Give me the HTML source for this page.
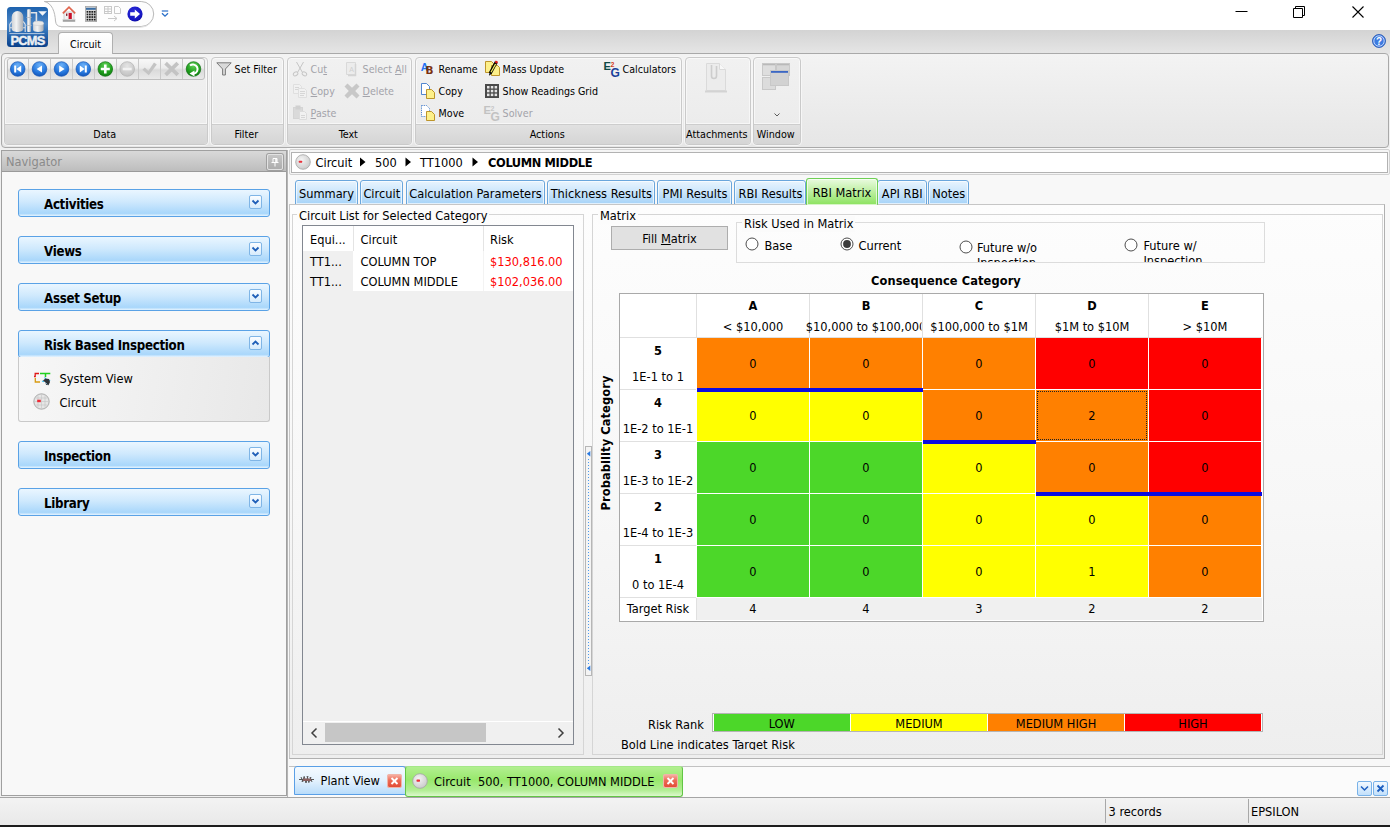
<!DOCTYPE html>
<html>
<head>
<meta charset="utf-8">
<title>PCMS - Circuit</title>
<style>
*{box-sizing:border-box;margin:0;padding:0}
html,body{width:1390px;height:827px;overflow:hidden;background:#f0f0f0}
body{position:relative;font-family:"DejaVu Sans Condensed","Liberation Sans",sans-serif;font-size:12.7px;color:#000;line-height:1}
.abs{position:absolute}
.t{position:absolute;white-space:pre;line-height:16px;height:16px}
.rb{font-size:10.6px;margin-top:.4px;margin-left:.6px}
.dis{color:#a3a3aa}
u{text-decoration:underline;text-underline-offset:1px}
/* title */
#title{left:0;top:0;width:1390px;height:30px;background:#fff}
#strip{left:0;top:30px;width:1390px;height:24px;background:linear-gradient(#d3d3d3,#e6e6e6)}
#ribbon{left:1px;top:53px;width:1388px;height:95px;border:1px solid #a9a9a9;border-radius:4px;background:linear-gradient(#f3f3f3,#e6e6e6)}
.grp{position:absolute;top:57px;height:88px;border:1px solid #cacaca;border-radius:4px;background:linear-gradient(#f1f1f1,#ececec 75%,#e9e9e9);box-shadow:0 0 0 1px #f6f6f6,inset 0 0 0 1px rgba(255,255,255,.55)}
.grp .lbl{position:absolute;left:0;right:0;bottom:0;height:20px;border-top:1px solid #cdcdcd;box-shadow:0 -1px 0 #f7f7f7;background:linear-gradient(#e1e1e1,#d5d5d5);text-align:center;padding-right:2.500px;font-size:10.7px;line-height:20px;border-radius:0 0 3px 3px}
#rtab{left:58px;top:32px;width:55px;height:22px;background:linear-gradient(#ffffff,#f6f6f6);border:1px solid #b0b0b0;border-bottom:none;border-radius:4px 4px 0 0;text-align:center;font-size:10.7px;line-height:23px}
/* navigator */
#nav{left:1px;top:150px;width:286px;height:646px;background:#f8f8f8;border:1px solid #a0a0a0}
#navh{left:0;top:0;width:284px;height:21px;background:linear-gradient(#d9d9d9,#bdbdbd);border-bottom:1px solid #9a9a9a;color:#8a8a8a;font-size:12.7px;line-height:21px;padding-left:4px}
.acc{position:absolute;left:18px;width:252px;height:28px;border:1px solid #5aa2e6;border-radius:3px;background:linear-gradient(#eaf6ff 0%,#cfe9fd 45%,#a9d7fb 90%,#e6f4ff 100%);font-weight:bold;font-size:13.2px;letter-spacing:-.3px;line-height:29px;padding-left:25px}
.acc i{position:absolute;right:7px;top:5px;width:13px;height:14px;border:1px solid #7fb5e6;border-radius:2px;background:linear-gradient(#fbfdff,#d6ebfc)}
/* main */
.tab{position:absolute;top:180px;height:25px;border:1px solid #6aa6dc;border-radius:3px 3px 1px 1px;background:linear-gradient(#e8f4fe 0%,#cde7fc 45%,#a6d3f8 100%);font-size:12.7px;line-height:25px;text-align:center;white-space:pre;padding-left:1px;box-shadow:inset 0 0 0 1px rgba(255,255,255,.65)}
.tab.on{top:178px;height:27px;border-color:#6fcf55;background:linear-gradient(#eafbe0 0%,#c0f0a6 45%,#8be25e 100%);line-height:28px;border-bottom:none}
.cell{position:absolute;text-align:center;font-size:12.7px}
</style>
</head>
<body>
<!-- ===== TITLE BAR ===== -->
<div class="abs" id="title"></div>
<div class="abs" id="strip"></div>
<div class="abs" id="ribbon"></div>
<div class="abs" id="rtab">Circuit</div>

<!--TOPICONS-START-->
<!-- quick access toolbar -->
<svg class="abs" style="left:40px;top:0px" width="116" height="29" viewBox="0 0 116 29">
  <path d="M4.300 1.500H101.200a12.500 12.500 0 0 1 0 25H21Q16 26.500 15.500 21C15 12 12 3 4.300 1.500z" fill="#fdfdfd" stroke="#b9b9b9" stroke-width="1"/>
  
  <path d="M21 27.300H101.200a13 13 0 0 0 9-4" fill="none" stroke="#e3e3e3" stroke-width="1"/>
</svg>
<!-- logo -->
<svg class="abs" style="left:7px;top:7px" width="41" height="40" viewBox="0 0 41 40">
  <defs><linearGradient id="lg" x1="0" y1="0" x2="0" y2="1"><stop offset="0" stop-color="#1d62ae"/><stop offset="0.42" stop-color="#4b86c6"/><stop offset="0.62" stop-color="#2f6fb6"/><stop offset="1" stop-color="#083f8a"/></linearGradient>
  <linearGradient id="tk" x1="0" y1="0" x2="1" y2="0"><stop offset="0" stop-color="#cfd2d6"/><stop offset="0.4" stop-color="#f3f3f3"/><stop offset="1" stop-color="#a9adb3"/></linearGradient></defs>
  <rect x="0" y="0" width="41" height="40" rx="3.500" fill="url(#lg)"/>
  <path d="M2.800 25V17.500a8 8 0 0 1 2.200-3M18.200 25V17.500a8 8 0 0 0-2.200-3M2.800 20.700h15.400" fill="none" stroke="#dfe4ea" stroke-width="1.100"/>
  <path d="M4.700 22V10a5.800 6 0 0 1 11.600 0v12c0 4-11.600 4-11.600 0z" fill="url(#tk)"/>
  <path d="M22 5.800h7.400v9" fill="none" stroke="#e1e4e8" stroke-width="1.600"/>
  <rect x="20.100" y="2.200" width="3.800" height="22.800" rx=".8" fill="url(#tk)"/>
  <path d="M19.500 10.500h5M19.500 18.500h5" stroke="#b9bdc3" stroke-width=".9"/>
  <path d="M26.100 16.300v6.500c0 3 10.500 3 10.500 0v-6.500z" fill="url(#tk)"/>
  <ellipse cx="31.350" cy="16.300" rx="5.250" ry="2.200" fill="#e9e9e9" stroke="#c4c7cb" stroke-width=".5"/>
  <path d="M31.200 4.300h8.700l-4.350 4.400z" fill="#f4f6f8"/>
  <rect x="2.500" y="26.200" width="35" height=".9" fill="#c9d6e6"/>
  <text x="20.500" y="37.700" text-anchor="middle" font-family="Liberation Sans, sans-serif" font-weight="bold" font-size="12.800" letter-spacing="-.75" fill="#eceff3" stroke="#eceff3" stroke-width=".45">PCMS</text>
</svg>
<!-- home -->
<svg class="abs" style="left:62px;top:6px" width="14" height="17" viewBox="0 0 14 17">
  <rect x="2" y="6" width="10" height="8" fill="#f1f1f1" stroke="#b5b5b5" stroke-width=".6"/>
  <path d="M.8 7.300L7 1.200l6.200 6.100" fill="none" stroke="#e0654e" stroke-width="1.700"/>
  <rect x="6.600" y="7" width="3.200" height="6.200" fill="#c8102a"/><rect x="4" y="7.500" width="1.400" height="2.400" fill="#8a2030"/>
  <rect x=".8" y="13.200" width="12.400" height="2.600" fill="#a2a2a2"/><rect x=".8" y="13.200" width="12.400" height=".8" fill="#d8d8d8"/>
</svg>
<!-- calc -->
<svg class="abs" style="left:85px;top:6px" width="12" height="16" viewBox="0 0 12 16">
  <rect x=".4" y=".4" width="11.200" height="15.200" fill="#d9d9d9" stroke="#a6a6a6" stroke-width=".8"/><rect x="1" y="1.800" width="10" height="2" fill="#3a6ea5"/><rect x="10.600" y=".8" width="1" height="14.800" fill="#8f8f8f"/>
  <g fill="#1e1e1e"><rect x="1.600" y="5" width="1.700" height="1.700"/><rect x="4" y="5" width="1.700" height="1.700"/><rect x="6.400" y="5" width="1.700" height="1.700"/><rect x="8.800" y="5" width="1.700" height="1.700"/><rect x="1.600" y="7.600" width="1.700" height="1.700"/><rect x="4" y="7.600" width="1.700" height="1.700"/><rect x="6.400" y="7.600" width="1.700" height="1.700"/><rect x="8.800" y="7.600" width="1.700" height="1.700"/><rect x="1.600" y="10.200" width="1.700" height="1.700"/><rect x="4" y="10.200" width="1.700" height="1.700"/><rect x="6.400" y="10.200" width="1.700" height="1.700"/><rect x="8.800" y="10.200" width="1.700" height="1.700"/><rect x="1.600" y="12.800" width="1.700" height="1.700"/><rect x="4" y="12.800" width="1.700" height="1.700"/><rect x="6.400" y="12.800" width="1.700" height="1.700"/><rect x="8.800" y="12.800" width="1.700" height="1.700"/></g>
</svg>
<!-- disabled grid/doc -->
<svg class="abs" style="left:104px;top:6px" width="18" height="16" viewBox="0 0 18 16">
  <g fill="none" stroke="#c9c9c9" stroke-width="1"><rect x=".5" y=".5" width="7" height="7"/><path d="M.5 3h7M.5 5.5h7M4 .5v7"/><path d="M10.5 .5h4l2 2v5h-6z"/><path d="M4 12.5h9m-3-2.5l3 2.5-3 2.5"/></g>
</svg>
<!-- blue arrow -->
<svg class="abs" style="left:127px;top:5.800px" width="16" height="16" viewBox="0 0 16 16">
  <defs><radialGradient id="ba" cx=".4" cy=".3" r=".8"><stop offset="0" stop-color="#2a2ad6"/><stop offset=".7" stop-color="#1616c4"/><stop offset="1" stop-color="#050590"/></radialGradient></defs>
  <circle cx="8" cy="8" r="7.6" fill="url(#ba)"/><path d="M3.2 6.2h4.6V3.4L13 8l-5.2 4.6V9.8H3.2z" fill="#fff"/>
</svg>
<!-- qat dropdown -->
<svg class="abs" style="left:161px;top:10px" width="8" height="8" viewBox="0 0 8 8"><path d="M.8 1h6.4" stroke="#2a6fc9" stroke-width="1.2"/><path d="M1 3.2l3 3 3-3" fill="none" stroke="#2a6fc9" stroke-width="1.3"/></svg>
<!-- window controls -->
<svg class="abs" style="left:1230px;top:0px" width="150" height="26" viewBox="0 0 150 26">
  <path d="M5.5 11.5h12" stroke="#000" stroke-width="1"/>
  <path d="M63.500 8.500h9v9h-9z M65.5 8.500v-2h9v9h-2" fill="none" stroke="#000" stroke-width="1"/>
  <path d="M122.500 6.500l11 11M133.500 6.500l-11 11" stroke="#000" stroke-width="1.1"/>
</svg>
<!-- help -->
<svg class="abs" style="left:1372px;top:34px" width="14" height="14" viewBox="0 0 14 14">
  <circle cx="7" cy="7" r="6.5" fill="#3d7be0" stroke="#1d4fae" stroke-width=".8"/><circle cx="7" cy="7" r="5.2" fill="none" stroke="#dfeaff" stroke-width=".8"/>
  <text x="7" y="10.6" text-anchor="middle" font-family="Liberation Sans, sans-serif" font-weight="bold" font-size="10" fill="#fff">?</text>
</svg>
<!--TOPICONS-END-->

<!--RIBBON-START-->
<div class="grp" style="left:4px;width:204px"><div class="lbl">Data</div></div>
<div class="grp" style="left:211px;width:73px"><div class="lbl">Filter</div></div>
<div class="grp" style="left:287px;width:125px"><div class="lbl">Text</div></div>
<div class="grp" style="left:415px;width:267px"><div class="lbl">Actions</div></div>
<div class="grp" style="left:685px;width:66px"><div class="lbl">Attachments</div></div>
<div class="grp" style="left:753px;width:48px"><div class="lbl">Window</div></div>
<!-- data nav toolbar -->
<div class="abs" style="left:7px;top:58px;width:198px;height:22px;border:1px solid #bebebe;border-radius:3px;background:linear-gradient(#f8f8f8 0%,#ececec 45%,#dadada 55%,#e9e9e9 100%)"></div>
<svg class="abs" style="left:7px;top:57.500px" width="198" height="22" viewBox="0 0 198 22">
  <defs>
    <radialGradient id="bl" cx=".5" cy=".25" r=".8"><stop offset="0" stop-color="#6db1f7"/><stop offset=".6" stop-color="#2678de"/><stop offset="1" stop-color="#0f4fb3"/></radialGradient>
    <radialGradient id="gr" cx=".5" cy=".25" r=".8"><stop offset="0" stop-color="#63d25a"/><stop offset=".6" stop-color="#1f9f1c"/><stop offset="1" stop-color="#0f7a10"/></radialGradient>
    <radialGradient id="gy" cx=".5" cy=".3" r=".8"><stop offset="0" stop-color="#e4e4e4"/><stop offset="1" stop-color="#bcbcbc"/></radialGradient>
  </defs>
  <g stroke="#c9c9c9" stroke-width="1"><path d="M21.500 1v20M43.500 1v20M65.500 1v20M87.500 1v20M109.500 1v20M131.500 1v20M153.500 1v20M175.500 1v20"/></g>
  <g stroke="#1a57b5" stroke-width=".7">
    <circle cx="10.700" cy="11" r="7.300" fill="url(#bl)"/><circle cx="32.500" cy="11" r="7.300" fill="url(#bl)"/><circle cx="54.500" cy="11" r="7.300" fill="url(#bl)"/><circle cx="76.300" cy="11" r="7.300" fill="url(#bl)"/>
  </g>
  <g fill="#fff">
    <path d="M7.200 7.500h2v7h-2zM14.200 7.500v7L9.400 11z"/>
    <path d="M35 7.500v7L29.600 11z"/>
    <path d="M52.200 7.500v7l5.400-3.500z"/>
    <path d="M72.800 7.500v7l4.800-3.500zM77.800 7.500h2v7h-2z"/>
  </g>
  <circle cx="98.300" cy="11" r="7.300" fill="url(#gr)" stroke="#117014" stroke-width=".7"/>
  <path d="M98.300 6.500v9M93.800 11h9" stroke="#fff" stroke-width="2.600"/>
  <circle cx="120.200" cy="11" r="7.300" fill="url(#gy)" stroke="#b3b3b3" stroke-width=".7"/>
  <path d="M115.700 11h9" stroke="#f2f2f2" stroke-width="2.600"/>
  <path d="M135.400 11.800l2.400-2.400 3.500 3.500 5.700-8.300 2.800 1.900-8 10.800z" fill="#c4c4c4"/>
  <path d="M160 6.500l9.400 9M169.400 6.500l-9.400 9" stroke="#c3c3c3" stroke-width="3.800" stroke-linecap="square"/>
  <circle cx="186.500" cy="11" r="7.300" fill="url(#gr)" stroke="#117014" stroke-width=".7"/>
  <path d="M183 7.600a4.600 4.600 0 1 1 4 8" fill="none" stroke="#fff" stroke-width="2"/><path d="M187.500 12.400v6.200l-5-3.100z" fill="#fff"/>
</svg>
<!-- filter -->
<svg class="abs" style="left:216px;top:62px" width="16" height="14" viewBox="0 0 16 14"><path d="M.8 .8h14.400L9.400 7v6H6.600V7z" fill="#d9d9d9" stroke="#7b7b7b" stroke-width="1"/></svg>
<div class="t rb" style="left:234px;top:61px">Set Filter</div>
<!-- text group -->
<svg class="abs" style="left:292px;top:61px" width="16" height="16" viewBox="0 0 16 16"><g fill="none" stroke="#c6c6c6" stroke-width="1"><path d="M4.500 1l6 10.500M11.500 1L5.500 11.500"/><ellipse cx="3.600" cy="12.800" rx="2.400" ry="1.800" transform="rotate(-35 3.600 12.800)"/><ellipse cx="12.400" cy="12.800" rx="2.400" ry="1.800" transform="rotate(35 12.400 12.800)"/></g></svg>
<div class="t rb dis" style="left:310px;top:61px">Cu<u>t</u></div>
<svg class="abs" style="left:292px;top:83px" width="16" height="16" viewBox="0 0 16 16"><g fill="#f1f1f1" stroke="#dfdfdf" stroke-width="1"><path d="M1.500 1.500h6l2 2v7h-8z"/><path d="M6.500 5.500h6l2 2v7h-8z"/></g><path d="M3 4.500h4M3 6.500h3M8 8.500h5M8 10.500h5M8 12.500h4" stroke="#d6d6d6"/></svg>
<div class="t rb dis" style="left:310px;top:83px"><u>C</u>opy</div>
<svg class="abs" style="left:292px;top:105px" width="16" height="16" viewBox="0 0 16 16"><g stroke-width="1"><rect x="1.500" y="2.500" width="9" height="11" fill="#dadada" stroke="#d4d4d4"/><rect x="4" y="1" width="4" height="3" fill="#d0d0d0" stroke="#d0d0d0"/><path d="M7.500 6.500h5l2 2v6h-7z" fill="#f1f1f1" stroke="#dcdcdc"/></g><path d="M9 10.500h4M9 12.500h4" stroke="#d6d6d6"/></svg>
<div class="t rb dis" style="left:310px;top:105px"><u>P</u>aste</div>
<svg class="abs" style="left:344px;top:61px" width="16" height="16" viewBox="0 0 16 16"><path d="M2.500 1.500h9v12h-9z" fill="#ececec" stroke="#d9d9d9"/><path d="M11.500 3v11.500H4" fill="none" stroke="#d4d4d4" stroke-width="1.500"/><text x="7.500" y="11" font-size="7" text-anchor="middle" fill="#d0d0d0" font-family="Liberation Sans, sans-serif">A</text></svg>
<div class="t rb dis" style="left:362px;top:61px">Select <u>A</u>ll</div>
<svg class="abs" style="left:344px;top:83px" width="16" height="16" viewBox="0 0 16 16"><path d="M.5 3.500l3-3 4.500 4.200 4.500-4.200 3 3-4.300 4.500 4.300 4.500-3 3-4.500-4.200-4.500 4.200-3-3 4.300-4.500z" fill="#c8c8c8"/></svg>
<div class="t rb dis" style="left:362px;top:83px"><u>D</u>elete</div>
<!-- actions -->
<svg class="abs" style="left:420px;top:61px" width="16" height="16" viewBox="0 0 16 16"><text x=".8" y="10" font-size="10.500" font-weight="bold" font-family="Liberation Sans, sans-serif" fill="#2470f4">A</text><text x="5.600" y="13" font-size="10.500" font-weight="bold" font-family="DejaVu Sans, sans-serif" fill="#7a3010">B</text></svg>
<div class="t rb" style="left:438px;top:61px">Rename</div>
<svg class="abs" style="left:420px;top:83px" width="16" height="16" viewBox="0 0 16 16"><path d="M1.500 .5h5l3 3v8h-8z" fill="#fff" stroke="#3d78c9" stroke-width=".9"/><path d="M6.500 6.500h5l3 3v6h-8z" fill="#fdf08a" stroke="#b78a1b" stroke-width=".9"/></svg>
<div class="t rb" style="left:438px;top:83px">Copy</div>
<svg class="abs" style="left:420px;top:105px" width="16" height="16" viewBox="0 0 16 16"><path d="M1.500 .5h5l3 3v8h-8z" fill="#fff" stroke="#3d78c9" stroke-width=".9" stroke-dasharray="1.200 1"/><path d="M6.500 6.500h5l3 3v6h-8z" fill="#fdf08a" stroke="#b78a1b" stroke-width=".9"/></svg>
<div class="t rb" style="left:438px;top:105px">Move</div>
<svg class="abs" style="left:484px;top:60px" width="17" height="17" viewBox="0 0 17 17"><path d="M1.500 1.500h6l2 2v9h-8z" fill="#fdf08a" stroke="#b78a1b" stroke-width=".9"/><path d="M7.500 5.500h6l2 2v8h-8z" fill="#fdf08a" stroke="#b78a1b" stroke-width=".9"/><path d="M12.300 2L6.200 13.200" stroke="#000" stroke-width="3.200"/><path d="M5 15.800l.6-3.200 2 1.100z" fill="#000"/><path d="M11.600 4l-4.600 8.300" stroke="#f8f060" stroke-width="1.300"/><path d="M12.900 1.200l-1 1.800" stroke="#e01818" stroke-width="2.600"/></svg>
<div class="t rb" style="left:502px;top:61px">Mass Update</div>
<svg class="abs" style="left:485px;top:84px" width="14" height="14" viewBox="0 0 14 14"><rect width="14" height="14" fill="#4a4a4a"/><g fill="#e6e6e6"><rect x="2" y="2" width="2.500" height="2.500"/><rect x="5.800" y="2" width="2.500" height="2.500"/><rect x="9.600" y="2" width="2.500" height="2.500"/><rect x="2" y="5.800" width="2.500" height="2.500"/><rect x="5.800" y="5.800" width="2.500" height="2.500"/><rect x="9.600" y="5.800" width="2.500" height="2.500"/><rect x="2" y="9.600" width="2.500" height="2.500"/><rect x="5.800" y="9.600" width="2.500" height="2.500"/><rect x="9.600" y="9.600" width="2.500" height="2.500"/></g></svg>
<div class="t rb" style="left:502px;top:83px">Show Readings Grid</div>
<svg class="abs" style="left:483px;top:104px" width="18" height="18" viewBox="0 0 18 18"><text x=".5" y="10" font-size="11" font-weight="bold" font-family="Liberation Sans, sans-serif" fill="#c2c2c2">E</text><text x="7.500" y="6.500" font-size="7" font-weight="bold" font-family="Liberation Sans, sans-serif" fill="#c8c8c8">2</text><text x="7.500" y="17" font-size="12" font-weight="bold" font-family="Liberation Sans, sans-serif" fill="#c2c2c2">G</text></svg>
<div class="t rb dis" style="left:502px;top:105px">Solver</div>
<svg class="abs" style="left:603px;top:60px" width="18" height="18" viewBox="0 0 18 18"><text x=".5" y="10" font-size="11" font-weight="bold" font-family="Liberation Sans, sans-serif" fill="#0e4a44">E</text><text x="7.500" y="6.500" font-size="7" font-weight="bold" font-family="Liberation Sans, sans-serif" fill="#d6401c">2</text><text x="7.500" y="17" font-size="12" font-weight="bold" font-family="Liberation Sans, sans-serif" fill="#1b3f9a">G</text></svg>
<div class="t rb" style="left:622px;top:61px">Calculators</div>
<!-- attachments -->
<svg class="abs" style="left:704px;top:62px" width="25" height="32" viewBox="0 0 25 32"><path d="M2.500 1.500h13l6 6v21h-19z" fill="#ececec" stroke="#dadada"/><path d="M15.500 1.500v6h6" fill="#f8f8f8" stroke="#dadada"/><rect x="1" y="28.500" width="22" height="2" fill="#d3d3d3"/><path d="M7.500 3v11a2.500 2.500 0 0 0 5 0V4" fill="none" stroke="#cdcdcd" stroke-width="1.600"/></svg>
<!-- window -->
<svg class="abs" style="left:761px;top:62px" width="31" height="30" viewBox="0 0 31 30"><g stroke="#c8c8c8" stroke-width="1"><rect x="1.500" y="1.500" width="13" height="12" fill="#dedede"/><rect x="15.500" y="1.500" width="13" height="12" fill="#d6d6d6"/><rect x="1.500" y="15.500" width="13" height="12" fill="#dcdcdc"/><rect x="9.500" y="8.500" width="18" height="15" fill="#d2d2d2"/></g><rect x="10" y="9" width="17" height="1.800" fill="#3b67c4"/><rect x="2" y="2" width="12" height="1.300" fill="#b9b9b9"/><rect x="16" y="2" width="12" height="1.300" fill="#b9b9b9"/></svg>
<svg class="abs" style="left:773px;top:112px" width="8" height="6" viewBox="0 0 8 6"><path d="M1.500 1.500L4 4l2.500-2.500" fill="none" stroke="#5a5a5a" stroke-width="1"/></svg>
<!--RIBBON-END-->

<!--NAV-START-->
<div class="abs" id="nav">
  <div class="abs" id="navh">Navigator</div>
  <div class="abs" style="left:265px;top:3px;width:16px;height:16px;border:1px solid #e2e2e2;border-radius:2px;background:linear-gradient(#c6c6c6,#adadad);box-shadow:0 0 0 1px #9f9f9f"></div>
  <svg class="abs" style="left:269px;top:6.500px" width="8" height="9" viewBox="0 0 8 9"><path d="M2 .5h4v4H2zM.5 4.500h7M4 4.500v4" fill="none" stroke="#fff" stroke-width="1"/><path d="M5 .5v4" stroke="#fff" stroke-width="1.500"/></svg>
</div>
<div class="acc" style="top:189px">Activities<i></i></div>
<div class="acc" style="top:236px">Views<i></i></div>
<div class="acc" style="top:283px">Asset Setup<i></i></div>
<div class="acc" style="top:330px">Risk Based Inspection<i class="up"></i></div>
<div class="abs" style="left:18px;top:357px;width:252px;height:65px;border:1px solid #c9c9c9;border-top:none;border-radius:0 0 3px 3px;background:linear-gradient(100deg,#f7f7f7,#e8e8e8)"></div>
<div class="acc" style="top:441px">Inspection<i></i></div>
<div class="acc" style="top:488px">Library<i></i></div>
<!-- chevrons -->
<svg class="abs" style="left:0;top:0;pointer-events:none" width="290" height="520" viewBox="0 0 290 520">
  <g fill="none" stroke="#1f5fb8" stroke-width="1.800">
    <path d="M252.500 200.500l3 3 3-3"/><path d="M252.500 247.500l3 3 3-3"/><path d="M252.500 294.500l3 3 3-3"/><path d="M252.500 344.500l3-3 3 3"/><path d="M252.500 452.500l3 3 3-3"/><path d="M252.500 499.500l3 3 3-3"/>
  </g>
</svg>
<!-- system view icon -->
<svg class="abs" style="left:33px;top:371px" width="18" height="16" viewBox="0 0 18 16">
  <path d="M6 2.500H2.200V5.500H1" fill="none" stroke="#e01818" stroke-width="1.300"/>
  <path d="M2.300 7V11H7" fill="none" stroke="#d89a10" stroke-width="1.300"/>
  <path d="M7 2.500H17.300M12.500 2.500V6" fill="none" stroke="#1fd01f" stroke-width="1.500"/>
  <path d="M11.500 6.500l1.500 1.500M9 10l2 .8M16 9.500l1.200-.3" stroke="#38c0f0" stroke-width="1.100"/>
  <path d="M10 9.500l2.500-2 3.500.5 1 3-1.500 3.200-2.500-.5-.5-2.200z" fill="#2e3338"/><path d="M12.500 11.500l2 2" stroke="#7aa0b8" stroke-width="1"/>
</svg>
<div class="t" style="left:59.500px;top:371px">System View</div>
<!-- circuit icon -->
<svg class="abs" style="left:33.400px;top:393.200px" width="17" height="17" viewBox="0 0 17 17">
  <circle cx="8.500" cy="8.500" r="7.700" fill="#e6e6e6" stroke="#9c9c9c" stroke-width=".8"/>
  <path d="M8.500 1v15M1 8.500h15M5 1.800v13.400M12 1.800v13.400M1.800 5h13.400M1.800 12h13.400" stroke="#c4c4c4" stroke-width=".6"/>
  <rect x="4.200" y="6.700" width="3.600" height="2.500" fill="#ee2a35"/>
</svg>
<div class="t" style="left:59.500px;top:394.500px">Circuit</div>
<!--NAV-END-->

<!--MAIN-START-->
<div class="abs" style="left:287px;top:148px;width:1103px;height:649px;background:#f8f8f8"></div>
<div class="abs" style="left:287px;top:150px;width:1px;height:647px;background:#b5b5b5"></div>
<div class="abs" style="left:289px;top:149px;width:1101px;height:26px;border:1px solid #d2d2d2;border-radius:2px;background:#f5f5f5"></div>
<div class="abs" style="left:291px;top:152px;width:1097px;height:21px;background:#fff;border:1px solid #b2b2b2"></div>
<svg class="abs" style="left:295px;top:154px" width="16" height="16" viewBox="0 0 16 16"><defs><radialGradient id="cg" cx=".4" cy=".35" r=".7"><stop offset="0" stop-color="#f4f4f4"/><stop offset="1" stop-color="#c9c9c9"/></radialGradient></defs><circle cx="8" cy="8" r="7.300" fill="url(#cg)" stroke="#a3a3a3" stroke-width=".8"/><rect x="3.800" y="6.700" width="3.300" height="2" rx=".5" fill="#e8303a"/></svg>
<div class="t" style="left:315.500px;top:155px">Circuit</div>
<div class="t" style="left:375px;top:155px">500</div>
<div class="t" style="left:420px;top:155px">TT1000</div>
<div class="t" style="left:488px;top:155px;font-weight:bold;letter-spacing:-.35px">COLUMN MIDDLE</div>
<svg class="abs" style="left:355px;top:157px" width="130" height="10" viewBox="0 0 130 10"><path d="M5 .5l5.500 4.500-5.500 4.500zM50.500 .5l5.500 4.500-5.500 4.500zM117.500 .5l5.500 4.500-5.500 4.500z" fill="#000"/></svg>
<div class="tab" style="left:294.5px;width:63.0px">Summary</div>
<div class="tab" style="left:359.5px;width:43.5px">Circuit</div>
<div class="tab" style="left:405.5px;width:139.0px">Calculation Parameters</div>
<div class="tab" style="left:546.5px;width:108.5px">Thickness Results</div>
<div class="tab" style="left:657px;width:75px">PMI Results</div>
<div class="tab" style="left:734px;width:72px">RBI Results</div>
<div class="tab" style="left:877px;width:49.5px">API RBI</div>
<div class="tab" style="left:928px;width:40.5px">Notes</div>
<div class="abs" style="left:289px;top:204px;width:1096px;height:555px;border:1px solid #c6c6c6;border-right-color:#b0b0b0;border-bottom-color:#b0b0b0;background:linear-gradient(#fdfdfd,#f7f7f7 55%,#eeeeee)"></div>
<div class="tab on" style="left:805.500px;width:72px">RBI Matrix</div>
<div class="abs" style="left:292px;top:214px;width:292px;height:541px;border:1px solid #d5d5d5"></div>
<div class="t" style="left:297px;top:207.700px;padding:0 2px;background:#fcfcfc">Circuit List for Selected Category</div>
<div class="abs" style="left:302px;top:225px;width:272px;height:520px;border:1px solid #828790;background:#f0f0f0"></div>
<div class="abs" style="left:303px;top:226px;width:270px;height:25px;background:#fff"></div>
<div class="abs" style="left:353px;top:251px;width:220px;height:40px;background:#fff"></div>
<div class="abs" style="left:353px;top:226px;width:1px;height:25px;background:#e4e4e4"></div>
<div class="abs" style="left:483px;top:226px;width:1px;height:25px;background:#e4e4e4"></div>
<div class="abs" style="left:483px;top:251px;width:1px;height:40px;background:#f3f3f3"></div>
<div class="t" style="left:310px;top:232px">Equi...</div><div class="t" style="left:360.500px;top:232px">Circuit</div><div class="t" style="left:490px;top:232px">Risk</div>
<div class="t" style="left:310px;top:253.5px">TT1...</div><div class="t" style="left:360.500px;top:253.5px">COLUMN TOP</div><div class="t" style="left:490px;top:253.5px;color:#ff0000">$130,816.00</div>
<div class="t" style="left:310px;top:273.5px">TT1...</div><div class="t" style="left:360.500px;top:273.5px">COLUMN MIDDLE</div><div class="t" style="left:490px;top:273.5px;color:#ff0000">$102,036.00</div>
<div class="abs" style="left:303px;top:721px;width:270px;height:23px;background:#f0f0f0;border-top:1px solid #fff"></div>
<div class="abs" style="left:325px;top:723px;width:161px;height:19px;background:#c6c6c6"></div>
<svg class="abs" style="left:309px;top:727px" width="10" height="12" viewBox="0 0 10 12"><path d="M7.500 1.500L3 6l4.500 4.500" fill="none" stroke="#404040" stroke-width="1.500"/></svg>
<svg class="abs" style="left:556px;top:727px" width="10" height="12" viewBox="0 0 10 12"><path d="M2.500 1.500L7 6l-4.500 4.500" fill="none" stroke="#404040" stroke-width="1.500"/></svg>
<div class="abs" style="left:585px;top:446px;width:7px;height:230px;border:1px solid #b6b6b6;background:#f4f4f4"></div>
<div class="abs" style="left:588px;top:459px;width:1px;height:205px;background:repeating-linear-gradient(#4a9af0 0 1px,transparent 1px 3px)"></div>
<svg class="abs" style="left:586px;top:450px" width="5" height="224" viewBox="0 0 5 224"><path d="M4.300 1L.8 3.800 4.300 6.600zM4.300 215.500L.8 218.300l3.500 2.800z" fill="#2a7ae0"/></svg>
<div class="abs" style="left:592px;top:214px;width:791px;height:541px;border:1px solid #d5d5d5"></div>
<div class="t" style="left:598px;top:207.700px;padding:0 2px;background:#fcfcfc">Matrix</div>
<div class="abs" style="left:611px;top:226px;width:117px;height:24px;border:1px solid #adadad;background:#e1e1e1;text-align:center;line-height:24px;font-size:12.700px">Fill <u>M</u>atrix</div>
<div class="abs" style="left:736px;top:222px;width:529px;height:41px;border:1px solid #dcdcdc;overflow:hidden"></div>
<div class="t" style="left:742px;top:215.700px;padding:0 2px;background:#fbfbfb">Risk Used in Matrix</div>
<div class="abs" style="left:737px;top:232px;width:527px;height:30px;overflow:hidden">
<svg class="abs" style="left:8.299999999999955px;top:5.400000000000006px" width="14" height="14" viewBox="0 0 14 14"><circle cx="7" cy="7" r="6" fill="#fff" stroke="#3a3a3a" stroke-width=".9"/></svg>
<div class="t" style="left:27.5px;top:5.5px">Base</div>
<svg class="abs" style="left:102.5px;top:5.400000000000006px" width="14" height="14" viewBox="0 0 14 14"><circle cx="7" cy="7" r="6" fill="#fff" stroke="#3a3a3a" stroke-width=".9"/><circle cx="7" cy="7" r="3.900" fill="#3c3c3c"/></svg>
<div class="t" style="left:121.5px;top:5.5px">Current</div>
<svg class="abs" style="left:221.5px;top:7.5px" width="14" height="14" viewBox="0 0 14 14"><circle cx="7" cy="7" r="6" fill="#fff" stroke="#3a3a3a" stroke-width=".9"/></svg>
<div class="t" style="left:240px;top:7.800000000000011px;line-height:15.500px;height:40px">Future w/o
Inspection</div>
<svg class="abs" style="left:387.29999999999995px;top:5.5px" width="14" height="14" viewBox="0 0 14 14"><circle cx="7" cy="7" r="6" fill="#fff" stroke="#3a3a3a" stroke-width=".9"/></svg>
<div class="t" style="left:406.5px;top:5.599999999999994px;line-height:15.500px;height:40px">Future w/
Inspection</div>
</div>
<div class="t" style="left:871px;top:272.500px;font-weight:bold;letter-spacing:.1px">Consequence Category</div>
<div class="t" style="left:534px;top:435px;width:144px;text-align:center;font-weight:bold;letter-spacing:.1px;transform:rotate(-90deg)">Probability Category</div>
<div class="abs" style="left:619px;top:293px;width:645px;height:329px;border:1px solid #a9a9a9;background:#fff"></div>
<div class="abs" style="left:696px;top:294px;width:1px;height:43px;background:#e0e0e0"></div>
<div class="abs" style="left:809.0px;top:294px;width:1px;height:43px;background:#e0e0e0"></div>
<div class="abs" style="left:922.0px;top:294px;width:1px;height:43px;background:#e0e0e0"></div>
<div class="abs" style="left:1035.0px;top:294px;width:1px;height:43px;background:#e0e0e0"></div>
<div class="abs" style="left:1148.0px;top:294px;width:1px;height:43px;background:#e0e0e0"></div>
<div class="abs" style="left:620px;top:337px;width:642px;height:1px;background:#e0e0e0"></div>
<div class="abs" style="left:696.5px;top:294px;width:112.0px;height:43px;clip-path:inset(0 0 0 -10px)"><div class="t" style="left:-50px;width:213.0px;text-align:center;top:4px;font-weight:bold">A</div><div class="t" style="left:-50px;width:213.0px;text-align:center;top:25px">&lt; $10,000</div></div>
<div class="abs" style="left:809.5px;top:294px;width:112.0px;height:43px;clip-path:inset(0 0 0 -10px)"><div class="t" style="left:-50px;width:213.0px;text-align:center;top:4px;font-weight:bold">B</div><div class="t" style="left:-50px;width:213.0px;text-align:center;top:25px">$10,000 to $100,000</div></div>
<div class="abs" style="left:922.5px;top:294px;width:112.0px;height:43px;clip-path:inset(0 0 0 -10px)"><div class="t" style="left:-50px;width:213.0px;text-align:center;top:4px;font-weight:bold">C</div><div class="t" style="left:-50px;width:213.0px;text-align:center;top:25px">$100,000 to $1M</div></div>
<div class="abs" style="left:1035.5px;top:294px;width:112.0px;height:43px;clip-path:inset(0 0 0 -10px)"><div class="t" style="left:-50px;width:213.0px;text-align:center;top:4px;font-weight:bold">D</div><div class="t" style="left:-50px;width:213.0px;text-align:center;top:25px">$1M to $10M</div></div>
<div class="abs" style="left:1148.5px;top:294px;width:112.0px;height:43px;clip-path:inset(0 0 0 -10px)"><div class="t" style="left:-50px;width:213.0px;text-align:center;top:4px;font-weight:bold">E</div><div class="t" style="left:-50px;width:213.0px;text-align:center;top:25px">&gt; $10M</div></div>
<div class="t" style="left:620px;width:76px;text-align:center;top:342.5px;font-weight:bold">5</div><div class="t" style="left:620px;width:76px;text-align:center;top:369.0px">1E-1 to 1</div>
<div class="abs" style="left:620px;top:389.0px;width:76px;height:1px;background:#e0e0e0"></div>
<div class="cell" style="left:697.0px;top:338.0px;width:112.0px;height:51.0px;background:#ff8000;line-height:51.0px">0</div>
<div class="cell" style="left:810.0px;top:338.0px;width:112.0px;height:51.0px;background:#ff8000;line-height:51.0px">0</div>
<div class="cell" style="left:923.0px;top:338.0px;width:112.0px;height:51.0px;background:#ff8000;line-height:51.0px">0</div>
<div class="cell" style="left:1036.0px;top:338.0px;width:112.0px;height:51.0px;background:#ff0000;line-height:51.0px">0</div>
<div class="cell" style="left:1149.0px;top:338.0px;width:112.0px;height:51.0px;background:#ff0000;line-height:51.0px">0</div>
<div class="t" style="left:620px;width:76px;text-align:center;top:394.5px;font-weight:bold">4</div><div class="t" style="left:620px;width:76px;text-align:center;top:421.0px">1E-2 to 1E-1</div>
<div class="abs" style="left:620px;top:441.0px;width:76px;height:1px;background:#e0e0e0"></div>
<div class="cell" style="left:697.0px;top:390.0px;width:112.0px;height:51.0px;background:#ffff00;line-height:51.0px">0</div>
<div class="cell" style="left:810.0px;top:390.0px;width:112.0px;height:51.0px;background:#ffff00;line-height:51.0px">0</div>
<div class="cell" style="left:923.0px;top:390.0px;width:112.0px;height:51.0px;background:#ff8000;line-height:51.0px">0</div>
<div class="cell" style="left:1036.0px;top:390.0px;width:112.0px;height:51.0px;background:#ff8000;line-height:51.0px">2</div>
<div class="cell" style="left:1149.0px;top:390.0px;width:112.0px;height:51.0px;background:#ff0000;line-height:51.0px">0</div>
<div class="t" style="left:620px;width:76px;text-align:center;top:446.5px;font-weight:bold">3</div><div class="t" style="left:620px;width:76px;text-align:center;top:473.0px">1E-3 to 1E-2</div>
<div class="abs" style="left:620px;top:493.0px;width:76px;height:1px;background:#e0e0e0"></div>
<div class="cell" style="left:697.0px;top:442.0px;width:112.0px;height:51.0px;background:#4cd729;line-height:51.0px">0</div>
<div class="cell" style="left:810.0px;top:442.0px;width:112.0px;height:51.0px;background:#4cd729;line-height:51.0px">0</div>
<div class="cell" style="left:923.0px;top:442.0px;width:112.0px;height:51.0px;background:#ffff00;line-height:51.0px">0</div>
<div class="cell" style="left:1036.0px;top:442.0px;width:112.0px;height:51.0px;background:#ff8000;line-height:51.0px">0</div>
<div class="cell" style="left:1149.0px;top:442.0px;width:112.0px;height:51.0px;background:#ff0000;line-height:51.0px">0</div>
<div class="t" style="left:620px;width:76px;text-align:center;top:498.5px;font-weight:bold">2</div><div class="t" style="left:620px;width:76px;text-align:center;top:525.0px">1E-4 to 1E-3</div>
<div class="abs" style="left:620px;top:545.0px;width:76px;height:1px;background:#e0e0e0"></div>
<div class="cell" style="left:697.0px;top:494.0px;width:112.0px;height:51.0px;background:#4cd729;line-height:51.0px">0</div>
<div class="cell" style="left:810.0px;top:494.0px;width:112.0px;height:51.0px;background:#4cd729;line-height:51.0px">0</div>
<div class="cell" style="left:923.0px;top:494.0px;width:112.0px;height:51.0px;background:#ffff00;line-height:51.0px">0</div>
<div class="cell" style="left:1036.0px;top:494.0px;width:112.0px;height:51.0px;background:#ffff00;line-height:51.0px">0</div>
<div class="cell" style="left:1149.0px;top:494.0px;width:112.0px;height:51.0px;background:#ff8000;line-height:51.0px">0</div>
<div class="t" style="left:620px;width:76px;text-align:center;top:550.5px;font-weight:bold">1</div><div class="t" style="left:620px;width:76px;text-align:center;top:577.0px">0 to 1E-4</div>
<div class="abs" style="left:620px;top:597.0px;width:76px;height:1px;background:#e0e0e0"></div>
<div class="cell" style="left:697.0px;top:546.0px;width:112.0px;height:51.0px;background:#4cd729;line-height:51.0px">0</div>
<div class="cell" style="left:810.0px;top:546.0px;width:112.0px;height:51.0px;background:#4cd729;line-height:51.0px">0</div>
<div class="cell" style="left:923.0px;top:546.0px;width:112.0px;height:51.0px;background:#ffff00;line-height:51.0px">0</div>
<div class="cell" style="left:1036.0px;top:546.0px;width:112.0px;height:51.0px;background:#ffff00;line-height:51.0px">1</div>
<div class="cell" style="left:1149.0px;top:546.0px;width:112.0px;height:51.0px;background:#ff8000;line-height:51.0px">0</div>
<div class="abs" style="left:697px;top:598px;width:565px;height:22px;background:#f0f0f0"></div>
<div class="abs" style="left:696px;top:598px;width:1px;height:22px;background:#e0e0e0"></div>
<div class="t" style="left:620px;width:76px;text-align:center;top:600.500px">Target Risk</div>
<div class="t" style="left:696.5px;width:113.0px;text-align:center;top:600.500px">4</div>
<div class="t" style="left:809.5px;width:113.0px;text-align:center;top:600.500px">4</div>
<div class="t" style="left:922.5px;width:113.0px;text-align:center;top:600.500px">3</div>
<div class="t" style="left:1035.5px;width:113.0px;text-align:center;top:600.500px">2</div>
<div class="t" style="left:1148.5px;width:113.0px;text-align:center;top:600.500px">2</div>
<div class="abs" style="left:696.500px;top:387.500px;width:226px;height:4px;background:#0b0be0"></div>
<div class="abs" style="left:922.500px;top:439.500px;width:113px;height:4px;background:#0b0be0"></div>
<div class="abs" style="left:1035.500px;top:491.500px;width:226px;height:4px;background:#0b0be0"></div>
<div class="abs" style="left:1037px;top:391px;width:110px;height:49px;border:1px dotted #222"></div>
<div class="t" style="left:648px;top:717px">Risk Rank</div>
<div class="abs" style="left:712px;top:713px;width:551px;height:19px;border:1px solid #b4b4b4;background:#fff"></div>
<div class="cell" style="left:713.5px;top:714px;width:136.5px;height:17px;background:#4cd729;line-height:19px">LOW</div>
<div class="cell" style="left:851.0px;top:714px;width:136.0px;height:17px;background:#ffff00;line-height:19px">MEDIUM</div>
<div class="cell" style="left:988.0px;top:714px;width:136.0px;height:17px;background:#ff8000;line-height:19px">MEDIUM HIGH</div>
<div class="cell" style="left:1125.0px;top:714px;width:136.0px;height:17px;background:#ff0000;line-height:19px">HIGH</div>
<div class="abs" style="left:619px;top:736px;width:300px;height:14px;overflow:hidden"><div class="t" style="left:2px;top:1px">Bold Line indicates Target Risk</div></div>
<!--MAIN-END-->

<!--BOTTOM-START-->
<div class="abs" style="left:289px;top:766px;width:1101px;height:31px;background:#fbfbfb;border-top:1px solid #c2c2c2"></div>

<div class="abs" style="left:294px;top:766px;width:112px;height:29px;border:1px solid #5a9fe6;border-radius:3px 3px 0 0;background:linear-gradient(#f4faff 0%,#e3f1fd 50%,#b9dcfa 100%)"></div>
<svg class="abs" style="left:298px;top:773px" width="18" height="14" viewBox="0 0 18 14"><path d="M1 6.500h15M3 4l2 5M6 3l2 7M9 3l2 7M12 4l2 5M4 9l2-5M8 10l2-7M11 9l2-5" stroke="#555" stroke-width="1" fill="none"/><path d="M5 5.500h8v2.500H5z" fill="#8a6060"/></svg>
<div class="t" style="left:320.500px;top:772.500px">Plant View</div>
<div class="abs" style="left:405px;top:766px;width:278px;height:31px;border:1px solid #62c545;border-top-color:#a5e888;border-radius:3px 3px 3px 3px;background:linear-gradient(#b2ef90 0%,#98e86c 45%,#b2ee94 80%,#dcf8cc 100%)"></div>
<svg class="abs" style="left:412px;top:773px" width="16" height="16" viewBox="0 0 16 16"><circle cx="8" cy="8" r="7.300" fill="url(#cg)" stroke="#a3a3a3" stroke-width=".8"/><rect x="4.500" y="6.500" width="3.500" height="2.200" rx=".6" fill="#e8303a"/></svg>
<div class="t" style="left:434px;top:774px">Circuit  500, TT1000, COLUMN MIDDLE</div>
<svg class="abs" style="left:386.500px;top:774px" width="15" height="14" viewBox="0 0 16 15"><defs><linearGradient id="xr" x1="0" y1="0" x2="0" y2="1"><stop offset="0" stop-color="#f8b4a8"/><stop offset=".45" stop-color="#ec6a55"/><stop offset="1" stop-color="#e24a33"/></linearGradient></defs><rect x=".5" y=".5" width="15" height="14" rx="2" fill="url(#xr)" stroke="#f0b4a8" stroke-width="1.200"/><path d="M4.800 4.300l6.400 6.400M11.200 4.300l-6.400 6.400" stroke="#fff" stroke-width="2"/></svg>
<svg class="abs" style="left:663px;top:774px" width="15" height="14" viewBox="0 0 16 15"><rect x=".5" y=".5" width="15" height="14" rx="2" fill="url(#xr)" stroke="#f0b4a8" stroke-width="1.200"/><path d="M4.800 4.300l6.400 6.400M11.200 4.300l-6.400 6.400" stroke="#fff" stroke-width="2"/></svg>
<!-- small buttons right -->
<div class="abs" style="left:1357px;top:781px;width:15px;height:15px;border:1px solid #79b2e8;border-radius:2px;background:linear-gradient(#f2f9ff,#c2e0fb)"></div>
<div class="abs" style="left:1373px;top:781px;width:15px;height:15px;border:1px solid #79b2e8;border-radius:2px;background:linear-gradient(#f2f9ff,#c2e0fb)"></div>
<svg class="abs" style="left:1357px;top:781px" width="31" height="15" viewBox="0 0 31 15"><path d="M4 5.500l3.500 3.500L11 5.500" fill="none" stroke="#1d5fc0" stroke-width="1.500"/><path d="M20.500 4.500l6 6M26.500 4.500l-6 6" stroke="#1d5fc0" stroke-width="1.800"/></svg>
<!-- status -->
<div class="abs" style="left:0;top:797px;width:1390px;height:28px;border-top:1px solid #a5a5a5;background:linear-gradient(#f3f3f3,#e9e9e9)"></div>
<div class="abs" style="left:1105px;top:799px;width:1px;height:24px;background:#a8a8a8"></div>
<div class="abs" style="left:1248px;top:799px;width:1px;height:24px;background:#a8a8a8"></div>
<div class="t" style="left:1108.500px;top:804px">3 records</div>
<div class="t" style="left:1251px;top:804px">EPSILON</div>
<div class="abs" style="left:0;top:824.500px;width:1390px;height:3px;background:#1d1d1d"></div>
<!--BOTTOM-END-->
</body>
</html>
